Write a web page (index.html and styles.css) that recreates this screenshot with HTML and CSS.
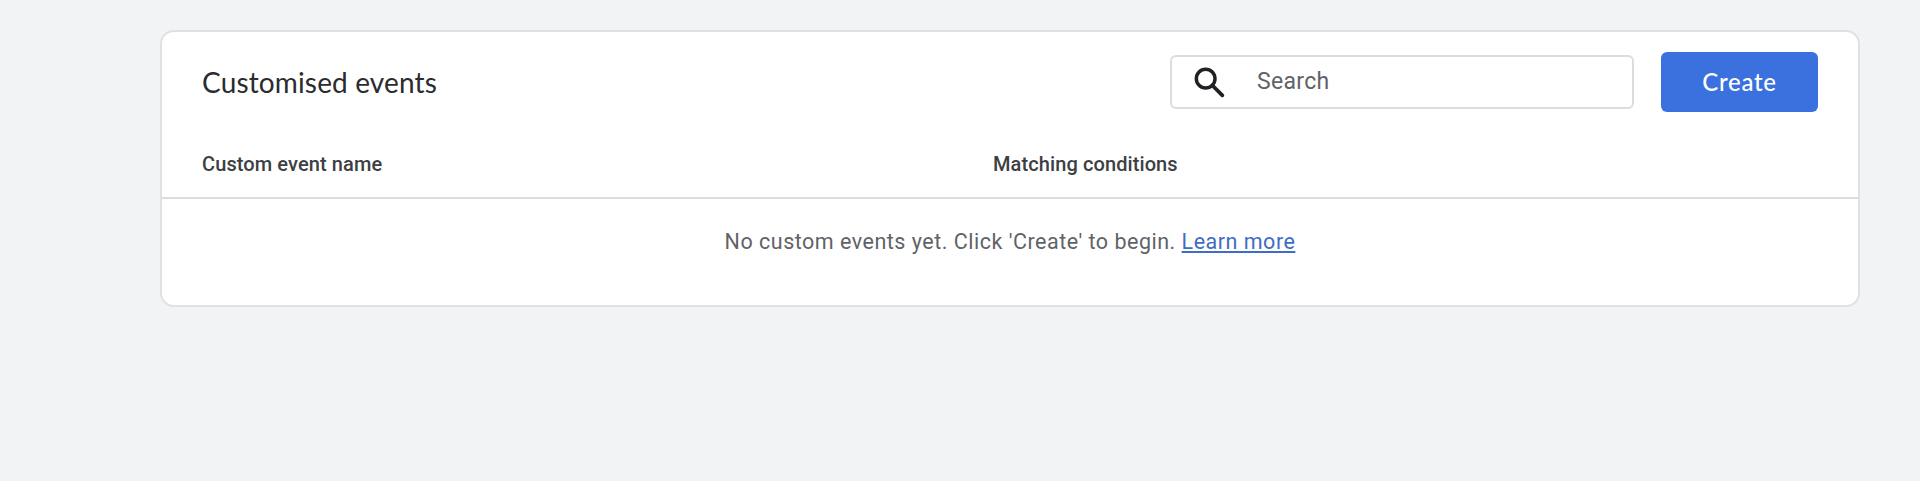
FILE: index.html
```html
<!DOCTYPE html>
<html lang="en">
<head>
<meta charset="utf-8">
<title>Customised events</title>
<link rel="stylesheet" href="styles.css">
</head>
<body>
<main class="card">
  <header class="card-head">
    <h1 class="title">Customised events</h1>
    <div class="search">
      <svg class="search-icon" viewBox="0 0 24 24" aria-hidden="true"><circle cx="9.5" cy="9.5" r="7" fill="none" stroke="#202124" stroke-width="2.6"/><path d="M14.6 14.6 L22 22" fill="none" stroke="#202124" stroke-width="2.8" stroke-linecap="round"/></svg>
      <span class="search-text">Search</span>
    </div>
    <button class="create">Create</button>
  </header>
  <div class="columns">
    <div class="col col-name">Custom event name</div>
    <div class="col">Matching conditions</div>
  </div>
  <p class="empty">No custom events yet. Click 'Create' to begin. <a class="learn" href="#">Learn more</a></p>
</main>
</body>
</html>
```
FILE: styles.css
```css
* { box-sizing: border-box; }
html, body { height: 100%; }
body {
  margin: 0;
  padding: 30px 60px 0 160px;
  background: #f1f3f4;
  font-family: Roboto, "Liberation Sans", sans-serif;
  overflow: hidden;
}
.card {
  height: 277px;
  background: #fff;
  border: 2px solid #dfe1e3;
  border-radius: 14px;
}
.card-head {
  display: flex;
  align-items: center;
  height: 99px;
  padding: 0 40px;
}
.title {
  flex: 1;
  margin: 0;
  font-family: Lato, Roboto, sans-serif;
  font-size: 28px;
  font-weight: 400;
  letter-spacing: 0.15px;
  color: #2a2c2f;
}
.search {
  display: flex;
  align-items: center;
  width: 464px;
  height: 54px;
  padding-left: 21px;
  border: 2px solid #dadce0;
  border-radius: 6px;
}
.search-icon { width: 32px; height: 32px; flex: none; }
.search-text {
  margin-left: 32px;
  font-size: 23px;
  letter-spacing: 0.3px;
  color: #5f6368;
}
.create {
  width: 157px;
  height: 60px;
  margin-left: 27px;
  border: 0;
  border-radius: 6px;
  background: #3a71de;
  color: #fff;
  font-family: Lato, Roboto, sans-serif;
  font-size: 24px;
  font-weight: 500;
  letter-spacing: 0.7px;
}
.columns {
  display: flex;
  align-items: center;
  height: 68px;
  padding: 0 40px;
  border-bottom: 2px solid #dadce0;
  font-size: 20px;
  font-weight: 500;
  letter-spacing: 0.1px;
  color: #3c4043;
}
.col-name { width: 791px; }
.empty {
  margin: 28px 0 0;
  text-align: center;
  font-size: 21.5px;
  letter-spacing: 0.5px;
  line-height: 30px;
  color: #5f6368;
}
.learn { color: #3f6cc4; text-decoration: underline; }
```
